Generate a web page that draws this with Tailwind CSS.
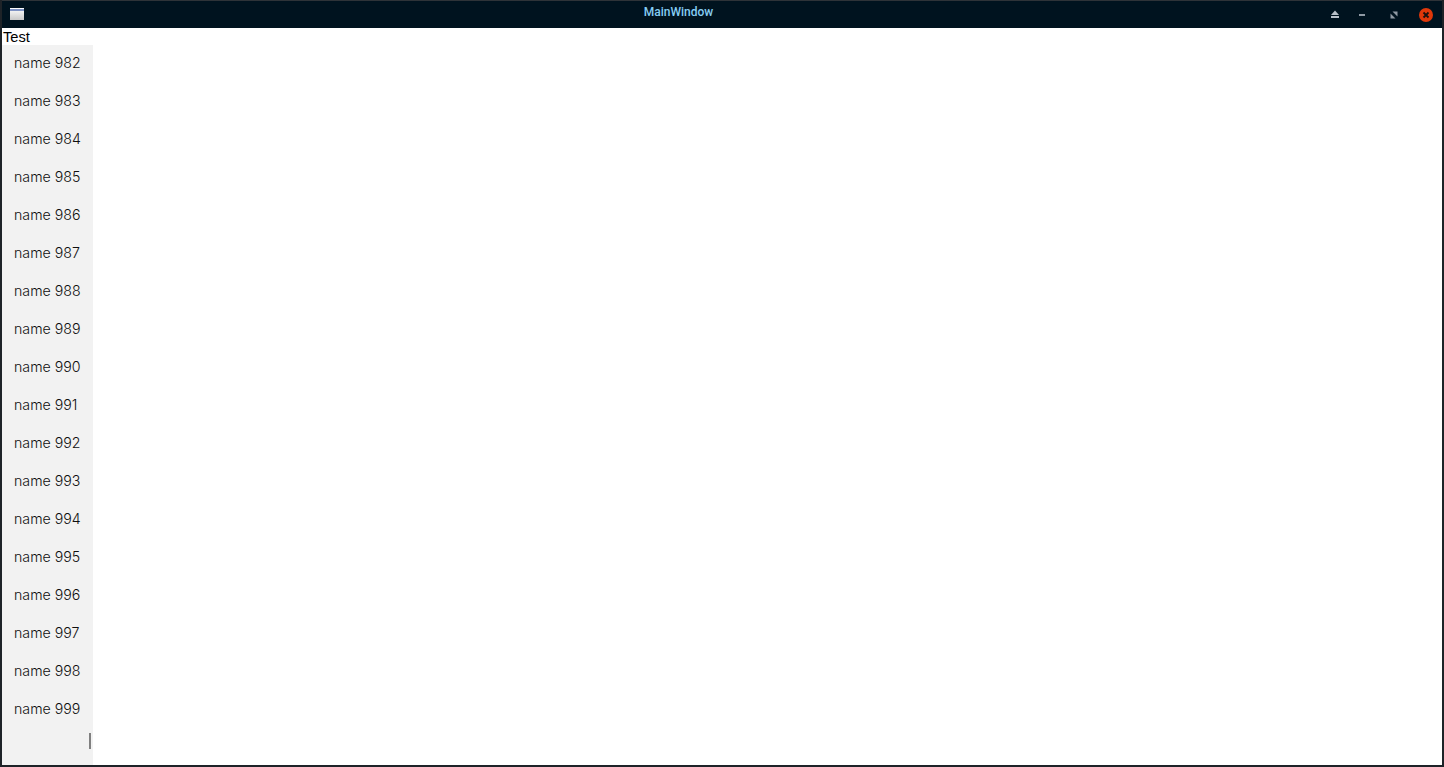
<!DOCTYPE html>
<html lang="en">
<head>
    <meta charset="UTF-8">
    <title>MainWindow</title>
    <script src="https://cdn.jsdelivr.net/npm/@tailwindcss/browser@4"></script>
</head>
<body class="bg-white">
    <div class="w-[1444px] h-[767px] flex flex-col overflow-hidden border-2 border-t-0 border-[#1e2328] bg-white">
        <!-- title bar -->
        <div class="h-[28px] -mx-[2px] shrink-0 flex items-center bg-[#00131f] border-t border-[#2e3338] font-['Roboto',sans-serif]">
            <div class="pl-[10px] w-[200px] pb-[1px]">
                <svg class="block" width="14" height="12" viewBox="0 0 14 12">
                    <defs><linearGradient id="win" x1="0" y1="0" x2="0" y2="1"><stop offset="0" stop-color="#ffffff"/><stop offset="1" stop-color="#c8c8c8"/></linearGradient></defs>
                    <rect width="14" height="12" fill="url(#win)"/><rect x="0" y="1" width="14" height="2" fill="#7f93c4"/>
                </svg>
            </div>
            <div class="flex-1 text-center text-[12px] font-medium text-[#86cdf3] pb-[5px]">MainWindow</div>
            <div class="w-[287px] flex items-center justify-end pr-[10px]">
                <svg width="16" height="16" viewBox="0 0 16 16"><path d="M8 3.500l4 4.500H4z" fill="#b8c0c8"/><rect x="4" y="9" width="8" height="2" fill="#b8c0c8"/></svg>
                <svg class="ml-[11px]" width="16" height="16" viewBox="0 0 16 16"><rect x="5" y="7" width="6" height="2" fill="#8f99a3"/></svg>
                <svg class="ml-[16px]" width="16" height="16" viewBox="0 0 16 16"><path d="M6.500 4.500h5v5zM4.500 6.500l5 5h-5z" fill="#8f99a3"/></svg>
                <svg class="ml-[16px]" width="16" height="16" viewBox="0 0 16 16"><circle cx="8" cy="8" r="7" fill="#e0380a"/><path d="M5.500 5.500l5 5M10.500 5.500l-5 5" stroke="#1a1210" stroke-width="1.800"/></svg>
            </div>
        </div>
        <div class="h-[17px] shrink-0 pl-px text-[14.67px] leading-[18px] text-black font-['Liberation_Sans',sans-serif]">Test</div>
        <!-- list -->
        <div class="relative w-[91px] flex-1 bg-[#f2f2f2] font-['Inter',sans-serif] font-light text-[14.2px] leading-[21px] text-[#0f0f0f]">
            <div class="h-[38px] pl-[12px] pb-[4px] flex items-center">name 982</div>
            <div class="h-[38px] pl-[12px] pb-[4px] flex items-center">name 983</div>
            <div class="h-[38px] pl-[12px] pb-[4px] flex items-center">name 984</div>
            <div class="h-[38px] pl-[12px] pb-[4px] flex items-center">name 985</div>
            <div class="h-[38px] pl-[12px] pb-[4px] flex items-center">name 986</div>
            <div class="h-[38px] pl-[12px] pb-[4px] flex items-center">name 987</div>
            <div class="h-[38px] pl-[12px] pb-[4px] flex items-center">name 988</div>
            <div class="h-[38px] pl-[12px] pb-[4px] flex items-center">name 989</div>
            <div class="h-[38px] pl-[12px] pb-[4px] flex items-center">name 990</div>
            <div class="h-[38px] pl-[12px] pb-[4px] flex items-center">name 991</div>
            <div class="h-[38px] pl-[12px] pb-[4px] flex items-center">name 992</div>
            <div class="h-[38px] pl-[12px] pb-[4px] flex items-center">name 993</div>
            <div class="h-[38px] pl-[12px] pb-[4px] flex items-center">name 994</div>
            <div class="h-[38px] pl-[12px] pb-[4px] flex items-center">name 995</div>
            <div class="h-[38px] pl-[12px] pb-[4px] flex items-center">name 996</div>
            <div class="h-[38px] pl-[12px] pb-[4px] flex items-center">name 997</div>
            <div class="h-[38px] pl-[12px] pb-[4px] flex items-center">name 998</div>
            <div class="h-[38px] pl-[12px] pb-[4px] flex items-center">name 999</div>
            <!-- scrollbar handle -->
            <div class="absolute left-[87px] top-[688px] w-[2px] h-[16px] bg-[#808080]"></div>
        </div>
    </div>
</body>
</html>
